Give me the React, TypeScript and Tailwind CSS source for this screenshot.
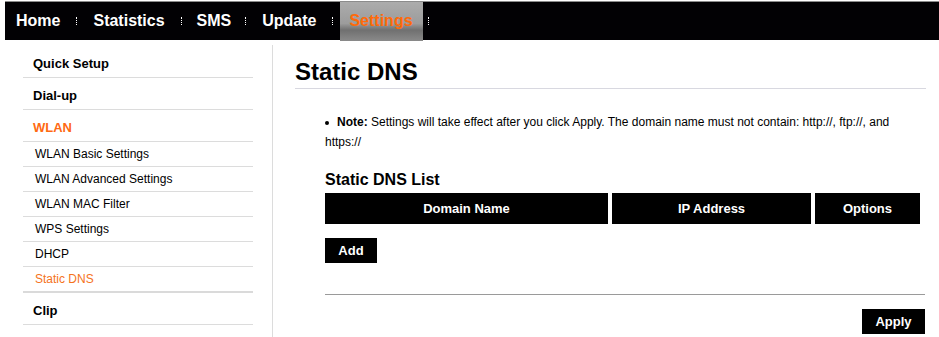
import * as React from "react"

function Sep({ className = "" }: { className?: string }) {
  return <span className={`h-[8px] border-l border-dotted border-white ${className}`} />
}

const subItems = [
  "WLAN Basic Settings",
  "WLAN Advanced Settings",
  "WLAN MAC Filter",
  "WPS Settings",
  "DHCP",
]

export default function App() {
  return (
    <div className="w-[939px] h-[337px] bg-white flex flex-col overflow-hidden font-['Liberation_Sans',Arial,sans-serif] text-black">
      <div className="h-px shrink-0" />
      <nav className="ml-[5px] h-[39px] shrink-0 border-t border-[#8c8c8c] bg-[#020104] flex items-center text-white font-bold text-[16px]">
        <a className="pl-[11px] pr-[16px]">Home</a>
        <Sep />
        <a className="px-[16px]">Statistics</a>
        <Sep />
        <a className="pl-[15px] pr-[14px]">SMS</a>
        <Sep />
        <a className="pl-[16px] pr-[15px]">Update</a>
        <Sep />
        <a className="ml-[7px] w-[83px] h-[39px] self-start flex items-center justify-center pb-px text-[#ff6a0a] bg-[linear-gradient(to_bottom,#acacac,#9c9c9c_55%,#707070_72%,#8a8a8a)]">
          Settings
        </a>
        <Sep className="ml-[5px]" />
      </nav>

      <div className="flex flex-1 min-h-0">
        {/* sidebar */}
        <aside className="ml-[23px] mr-[19px] mt-[6px] w-[230px] shrink-0">
          <div className="h-[32px] pt-[11px] leading-none text-[13px] font-bold border-b border-[#dcdcdc] pl-[10px]">Quick Setup</div>
          <div className="h-[32px] pt-[11px] leading-none text-[13px] font-bold border-b border-[#dcdcdc] pl-[10px]">Dial-up</div>
          <div className="h-[32px] pt-[11px] leading-none text-[13px] font-bold border-b border-[#dcdcdc] pl-[10px] text-[#ff6a13]">WLAN</div>
          {subItems.map((s) => (
            <div key={s} className="h-[25px] pt-[6px] leading-none text-[12px] border-b border-[#dcdcdc] pl-[12px]">
              {s}
            </div>
          ))}
          <div className="h-[26px] pt-[6px] leading-none text-[12px] border-b-2 border-[#dadada] pl-[12px] text-[#f5731c]">Static DNS</div>
          <div className="h-[32px] pt-[11px] leading-none text-[13px] font-bold border-b border-[#dcdcdc] pl-[10px]">Clip</div>
        </aside>

        {/* main */}
        <main className="mt-[5px] flex-1 border-l border-[#dcdcdc]">
          <h1 className="ml-[22px] mr-[13px] mt-[15px] pb-[4px] leading-[24px] text-[24px] font-bold border-b border-[#d8d8e0]">
            Static DNS
          </h1>

          <div className="ml-[52px] w-[600px]">
            <p className="mt-[23px] text-[12px] leading-[20px] whitespace-nowrap">
              <span className="relative top-[-1px] inline-block w-[4px] h-[4px] rounded-full bg-black mr-[8px]" />
              <b>Note:</b> Settings will take effect after you click Apply. The domain name must not contain: http://, ftp://, and
              <br />
              https://
            </p>

            <h2 className="mt-[20px] text-[16px] leading-none font-bold">Static DNS List</h2>

            <div className="mt-[5px] flex gap-[4px] text-white text-[13px] font-bold">
              <div className="w-[283px] h-[31px] bg-black flex items-center justify-center">Domain Name</div>
              <div className="w-[199px] h-[31px] bg-black flex items-center justify-center">IP Address</div>
              <div className="w-[105px] h-[31px] bg-black flex items-center justify-center">Options</div>
            </div>

            <button className="mt-[14px] w-[52px] h-[25px] bg-black text-white text-[13px] font-bold flex items-center justify-center">
              Add
            </button>

            <div className="mt-[31px] border-t border-[#9a9a9a]" />

            <div className="mt-[14px] flex justify-end">
              <button className="w-[63px] h-[25px] bg-black text-white text-[13px] font-bold flex items-center justify-center">
                Apply
              </button>
            </div>
          </div>
        </main>
      </div>
    </div>
  )
}
